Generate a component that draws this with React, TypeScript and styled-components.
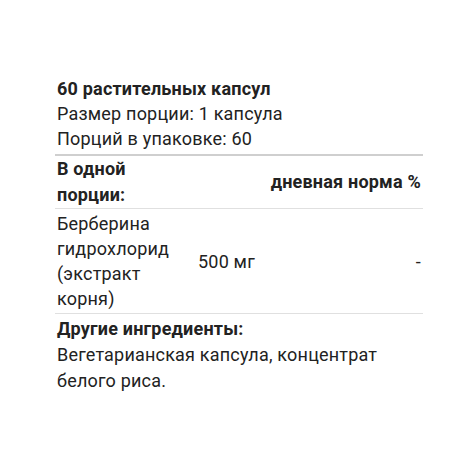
import React from "react";
import styled, { createGlobalStyle } from "styled-components";

const Global = createGlobalStyle`
  html, body { margin: 0; padding: 0; background: #fff; }
  body { font-family: Roboto, "Noto Sans", Arial, sans-serif; color: #222; }
`;

const Page = styled.div`
  width: 474px;
  height: 474px;
  box-sizing: border-box;
  padding: 76px 51px 0 55px;
  font-size: 18px;
  letter-spacing: 0.2px;
`;

const Info = styled.div`
  padding-left: 2px;
  line-height: 25px;
`;

const Line = styled.div<{ $bold?: boolean }>`
  font-weight: ${(p) => (p.$bold ? 700 : 400)};
`;

const Table = styled.div`
  display: grid;
  grid-template-columns: 141px 1fr auto;
  border-top: 2px solid #cfcfcf;
  margin-top: 3px;
`;

const Cell = styled.div<{ $bold?: boolean; $right?: boolean; $head?: boolean }>`
  padding: ${(p) => (p.$head ? "0 2px" : "2px 2px")};
  line-height: ${(p) => (p.$head ? "26px" : "25px")};
  font-weight: ${(p) => (p.$bold ? 700 : 400)};
  text-align: ${(p) => (p.$right ? "right" : "left")};
  display: flex;
  align-items: center;
  justify-content: ${(p) => (p.$right ? "flex-end" : "flex-start")};
  border-bottom: 1px solid #e0e0e0;
`;

const Footer = styled.div`
  padding: 2px 2px;
  line-height: 26px;
`;

export default function App() {
  return (
    <Page>
      <Global />
      <Info>
        <Line $bold>60 растительных капсул</Line>
        <Line>Размер порции: 1 капсула</Line>
        <Line>Порций в упаковке: 60</Line>
      </Info>
      <Table>
        <Cell $head $bold>В одной<br />порции:</Cell>
        <Cell $head />
        <Cell $head $bold $right>дневная норма %</Cell>
        <Cell>Берберина гидрохлорид (экстракт корня)</Cell>
        <Cell>500 мг</Cell>
        <Cell $right>-</Cell>
      </Table>
      <Footer>
        <Line $bold>Другие ингредиенты:</Line>
        <Line>Вегетарианская капсула, концентрат белого риса.</Line>
      </Footer>
    </Page>
  );
}
